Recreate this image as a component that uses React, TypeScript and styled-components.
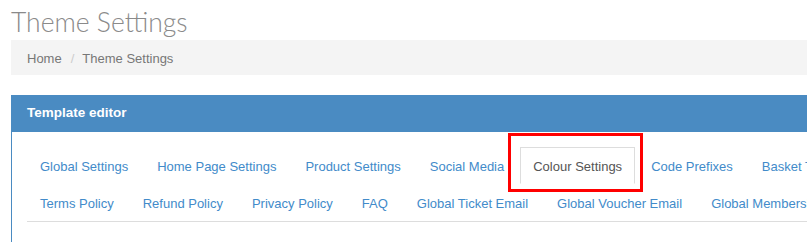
import React from "react";
import styled, { createGlobalStyle, css } from "styled-components";

const Global = createGlobalStyle`
  html, body { margin: 0; padding: 0; background: #fff; overflow: hidden; }
  body { font-family: "Liberation Sans", Arial, sans-serif; font-size: 13px; color: #333; }
  * { box-sizing: border-box; }
`;

const Page = styled.div`
  width: 1200px;
  padding: 0 0 0 11px;
`;

const Title = styled.h1`
  margin: 0;
  height: 40px;
  padding-top: 6px;
  font-family: Lato, "Open Sans", sans-serif;
  font-weight: 300;
  font-size: 26.5px;
  line-height: 32px;
  color: #8a8a8a;
`;

const Breadcrumb = styled.ol`
  list-style: none;
  margin: 0 0 20px;
  padding: 1px 16px 0;
  height: 35px;
  display: flex;
  align-items: center;
  background: #f4f4f4;
  line-height: 19px;
`;

const Crumb = styled.li`
  color: #777;
`;

const Sep = styled.li`
  color: #ccc;
  padding: 0 8px 0 9px;
`;

const Panel = styled.section`
  border: 1px solid #4a8bc2;
  background: #fff;
  height: 160px;
`;

const PanelHeading = styled.header`
  background: #4a8bc2;
  color: #fff;
  font-weight: bold;
  font-size: 13.5px;
  height: 36px;
  line-height: 34px;
  padding: 0 15px;
`;

const PanelBody = styled.div`
  padding: 15px 15px 0;
`;

const Tabs = styled.nav`
  border-bottom: 1px solid #ddd;
  display: flex;
  flex-direction: column;
`;

const TabRow = styled.ul`
  list-style: none;
  margin: 0;
  padding: 0;
  display: flex;
  flex-wrap: nowrap;
  white-space: nowrap;
`;

const Tab = styled.li<{ $active?: boolean }>`
  position: relative;
  margin-right: 3px;
  padding: 10px 12px 8px;
  line-height: 17px;
  border: 1px solid transparent;
  color: #428bca;
  ${(p) =>
    p.$active &&
    css`
      color: #555;
      border-color: #ddd;
      border-bottom-color: transparent;
      background: #fff;
    `}
`;

const Highlight = styled.span`
  position: absolute;
  left: -13px;
  top: -15px;
  right: -9px;
  bottom: -9px;
  border: 3px solid #f00;
  pointer-events: none;
`;

const row1 = [
  "Global Settings",
  "Home Page Settings",
  "Product Settings",
  "Social Media",
  "Colour Settings",
  "Code Prefixes",
  "Basket Texts",
];
const row2 = [
  "Terms Policy",
  "Refund Policy",
  "Privacy Policy",
  "FAQ",
  "Global Ticket Email",
  "Global Voucher Email",
  "Global Membership Email",
];

export default function App() {
  return (
    <Page>
      <Global />
      <Title>Theme Settings</Title>
      <Breadcrumb>
        <Crumb>Home</Crumb>
        <Sep>/</Sep>
        <Crumb>Theme Settings</Crumb>
      </Breadcrumb>
      <Panel>
        <PanelHeading>Template editor</PanelHeading>
        <PanelBody>
          <Tabs>
            <TabRow>
              {row1.map((t) => (
                <Tab key={t} $active={t === "Colour Settings"}>
                  {t}
                  {t === "Colour Settings" && <Highlight />}
                </Tab>
              ))}
            </TabRow>
            <TabRow>
              {row2.map((t) => (
                <Tab key={t}>{t}</Tab>
              ))}
            </TabRow>
          </Tabs>
        </PanelBody>
      </Panel>
    </Page>
  );
}
